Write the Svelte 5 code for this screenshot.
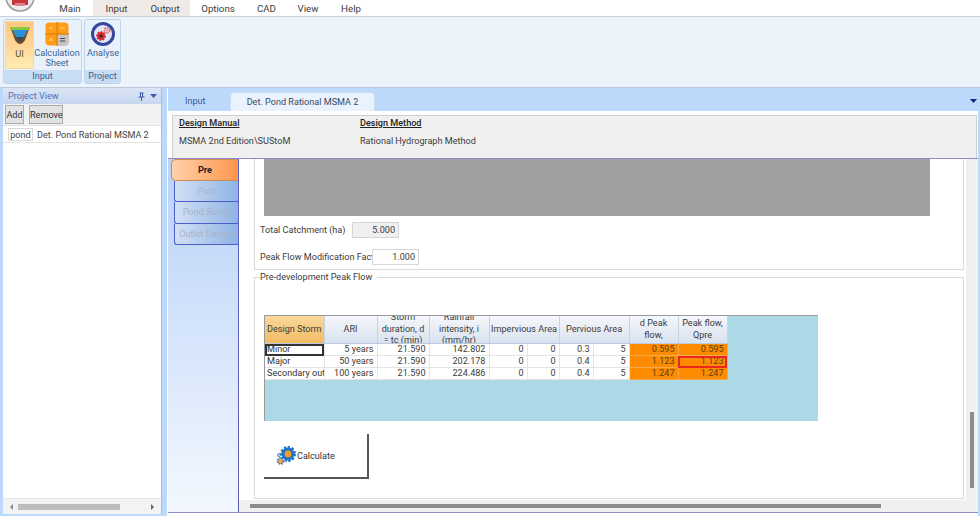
<script>
  const menus = [
    { label: 'Main', w: 46 },
    { label: 'Input', w: 47, on: true },
    { label: 'Output', w: 50, on: true },
    { label: 'Options', w: 56 },
    { label: 'CAD', w: 41 },
    { label: 'View', w: 42 },
    { label: 'Help', w: 44 }
  ];
  const cols = [59, 53, 52, 60, 38, 32, 34, 36, 49, 49];
  const rows = [
    ['Minor', '5 years', '21.590', '142.802', '0', '0', '0.3', '5', '0.595', '0.595'],
    ['Major', '50 years', '21.590', '202.178', '0', '0', '0.4', '5', '1.123', '1.123'],
    ['Secondary out', '100 years', '21.590', '224.486', '0', '0', '0.4', '5', '1.247', '1.247']
  ];
  const heads = [
    { t: ['Design Storm'], cls: 'first' },
    { t: ['ARI'] },
    { t: ['Storm', 'duration, d', '= tc (min)'] },
    { t: ['Rainfall', 'intensity, i', '(mm/hr)'] },
    { t: ['Impervious Area'], span: 2 },
    { t: ['Pervious Area'], span: 2 },
    { t: ['d Peak', 'flow,'] },
    { t: ['Peak flow,', 'Qpre'] }
  ];
</script>

<div class="page">
  <svg class="logo" width="30" height="12" viewBox="0 0 30 12" aria-hidden="true">
    <circle cx="15" cy="-3" r="14" fill="#eee" stroke="#9a9a9a" stroke-width="1.5" />
    <rect x="7" y="0" width="16" height="5" fill="#c8373c" />
    <rect x="10" y="3" width="10" height="3" fill="#e0808a" />
  </svg>

  <nav class="menu">
    {#each menus as m}
      <span class="menu-item" class:on={m.on} style="width:{m.w}px">{m.label}</span>
    {/each}
  </nav>

  <section class="ribbon">
    <div class="group g-input">
      <div class="tools">
        <div class="tool active">
          <svg width="24" height="24" viewBox="0 0 24 24" aria-hidden="true">
            <path d="M3 6 H21 L17 17 Q12 25 7 17 Z" fill="#6e4a2c" />
            <path d="M4 6 H20 L16 14 H8 Z" fill="#2b8fd8" />
            <path d="M2 4 H22 V7 H2 Z" fill="#8cc63f" />
            <path d="M8 14 H16 L13 19 H11 Z" fill="#3f4a55" />
          </svg>
          <span class="tool-label">UI</span>
        </div>
        <div class="tool calc">
          <svg width="24" height="24" viewBox="0 0 24 24" aria-hidden="true">
            <rect x="0.5" y="0.5" width="23" height="23" rx="4" fill="#ff9b14" />
            <path d="M12.5 12.5 H23.5 V20 Q23.5 23.5 20 23.5 H12.5 Z" fill="#c4c4c4" />
            <path d="M12 0 V24 M0 12 H24" stroke="#d97a00" stroke-width="1" />
            <path d="M4 6 H8 M15 6 H20 M4.500 16 L7.500 19 M7.500 16 L4.500 19" stroke="#ffd9a0" stroke-width="1" />
            <path d="M15 16.500 H20 M15 19 H20" stroke="#444" stroke-width="1" />
          </svg>
          <span class="tool-label">Calculation<br />Sheet</span>
        </div>
      </div>
      <div class="group-label">Input</div>
    </div>
    <div class="group g-project">
      <div class="tools">
        <div class="tool analyse">
          <svg width="24" height="24" viewBox="0 0 24 24" aria-hidden="true">
            <circle cx="12" cy="12" r="10.500" fill="#dfe6f5" stroke="#34489c" stroke-width="3" />
            <circle cx="10" cy="14" r="4" fill="#d92a35" stroke="#d92a35" stroke-width="2" stroke-dasharray="1.500 1.500" />
            <circle cx="10" cy="14" r="1.500" fill="#222" />
            <circle cx="16" cy="8.500" r="2.800" fill="#eeb3b8" stroke="#d9737c" stroke-width="1.500" stroke-dasharray="1.500 1" />
          </svg>
          <span class="tool-label">Analyse</span>
        </div>
      </div>
      <div class="group-label">Project</div>
    </div>
  </section>

  <div class="body">
    <aside class="side">
      <header class="side-head">
        <span>Project View</span>
        <span class="side-icons">
          <svg width="9" height="9" viewBox="0 0 9 9" aria-hidden="true"><path d="M2.500 1 H6.500 M3.500 1 V5 M5.500 1 V5 M1.500 5 H7.500 M4.500 5 V9" stroke="#3b5ba8" fill="none" /></svg>
          <svg width="7" height="4" viewBox="0 0 7 4" aria-hidden="true"><path d="M0 0 H7 L3.500 4 Z" fill="#3b5ba8" /></svg>
        </span>
      </header>
      <div class="side-btns">
        <button class="btn add">Add</button>
        <button class="btn remove">Remove</button>
      </div>
      <div class="list">
        <div class="list-row">
          <span class="cell">pond</span>
          <span>Det. Pond Rational MSMA 2</span>
        </div>
      </div>
      <div class="side-scroll">
        <span class="arrow-l"></span>
        <span class="side-thumb"></span>
        <span class="arrow-r"></span>
      </div>
    </aside>

    <main class="work">
      <div class="tabs">
        <span class="tab">Input</span>
        <span class="tab current">Det. Pond Rational MSMA 2</span>
        <svg class="tabs-menu" width="7" height="4" viewBox="0 0 7 4" aria-hidden="true"><path d="M0 0 H7 L3.500 4 Z" fill="#1a237e" /></svg>
      </div>

      <div class="doc">
        <div class="design">
          <div class="d-col">
            <strong>Design Manual</strong>
            <span>MSMA 2nd Edition\SUStoM</span>
          </div>
          <div class="d-col">
            <strong>Design Method</strong>
            <span>Rational Hydrograph Method</span>
          </div>
        </div>

        <div class="split">
          <div class="vtabs">
            <div class="vtab pre">Pre</div>
            <div class="vtab">Post</div>
            <div class="vtab">Pond Sizing</div>
            <div class="vtab">Outlet Design</div>
          </div>

          <div class="pane">
            <div class="pane-top">
              <div class="viewport">
                <div class="box one">
                  <div class="grey"></div>
                  <div class="field f1">
                    <span class="f-label">Total Catchment (ha)</span>
                    <span class="input ro">5.000</span>
                  </div>
                  <div class="field f2">
                    <span class="f-label clip">Peak Flow Modification Factor</span>
                    <span class="input">1.000</span>
                  </div>
                </div>

                <fieldset class="box two">
                  <legend>Pre-development Peak Flow</legend>
                  <div class="grid-wrap">
                    <table>
                      <colgroup>
                        {#each cols as c}<col style="width:{c}px" />{/each}
                      </colgroup>
                      <thead>
                        <tr>
                          {#each heads as h}
                            <th colspan={h.span || 1} class={h.cls || ''}>
                              <div class="th-in">
                                {#each h.t as line}<span>{line}</span>{/each}
                              </div>
                            </th>
                          {/each}
                        </tr>
                      </thead>
                      <tbody>
                        {#each rows as r, ri}
                          <tr>
                            {#each r as v, i}
                              <td
                                class:txt={i === 0}
                                class:peak={i >= 8}
                                class:sel={ri === 0 && i === 0}
                                class:hit={ri === 1 && i === 9}
                              >{v}</td>
                            {/each}
                          </tr>
                        {/each}
                      </tbody>
                    </table>
                  </div>
                  <button class="calc-btn">
                    <svg width="21" height="21" viewBox="0 0 21 21" aria-hidden="true">
                      <circle cx="12" cy="9" r="6.500" fill="#1f74c9" stroke="#1f74c9" stroke-width="3" stroke-dasharray="2.200 1.500" />
                      <circle cx="12" cy="9" r="5" fill="#1f74c9" />
                      <circle cx="12" cy="9" r="3.400" fill="#f59a2c" />
                      <circle cx="4.500" cy="16" r="3" fill="#f2a64a" stroke="#2f7fce" stroke-width="1.800" stroke-dasharray="1.500 1" />
                      <circle cx="3" cy="10" r="1.500" fill="#cfe0f2" stroke="#4a86c5" />
                    </svg>
                    <span>Calculate</span>
                  </button>
                </fieldset>
              </div>
              <div class="vscroll"><span class="vthumb"></span></div>
            </div>
            <div class="hscroll"><span class="hthumb"></span></div>
          </div>
        </div>
      </div>
    </main>
  </div>
</div>

<style>
  :global(body) {
    margin: 0;
    background: #fff;
  }
  .page {
    position: relative;
    width: 980px;
    height: 516px;
    overflow: hidden;
    display: flex;
    flex-direction: column;
    font-family: Roboto, "Noto Sans", sans-serif;
    font-size: 9.100px;
    color: #3c3c3c;
    background: #bcd8fb;
  }
  .logo {
    position: absolute;
    left: 5px;
    top: 0;
  }

  /* menu */
  .menu {
    height: 17px;
    flex: none;
    display: flex;
    padding-left: 47px;
    background: #fff;
    border-bottom: 1px solid #c9d3de;
    box-sizing: border-box;
  }
  .menu-item {
    flex: none;
    text-align: center;
    font-size: 9.700px;
    line-height: 17px;
    color: #3c3c3c;
  }
  .menu-item.on {
    background: #efeae6;
  }

  /* ribbon */
  .ribbon {
    height: 71px;
    flex: none;
    display: flex;
    gap: 2px;
    padding: 2px 0 3px 3px;
    box-sizing: border-box;
    background: #ecf3fb;
    border-bottom: 1px solid #b9c9dc;
  }
  .group {
    display: flex;
    flex-direction: column;
    border: 1px solid #bcd4ee;
    border-radius: 3px;
    background: #e9f1fb;
    box-sizing: border-box;
  }
  .g-input {
    width: 79px;
  }
  .g-project {
    width: 37px;
  }
  .tools {
    flex: 1;
    display: flex;
    padding: 1px 0 0 1px;
  }
  .tool {
    display: flex;
    flex-direction: column;
    align-items: center;
    box-sizing: border-box;
    padding-top: 1px;
    color: #42628f;
  }
  .tool-label {
    text-align: center;
    line-height: 10px;
    margin-top: 2px;
    white-space: nowrap;
  }
  .tool.active {
    width: 29px;
    height: 48px;
    background: linear-gradient(#fcc77f, #ffd79a 55%, #ffedb2);
    border: 1px solid #f3d9a8;
    color: #5b5230;
  }
  .tool.calc {
    width: 46px;
  }
  .tool.analyse {
    width: 35px;
  }
  .group-label {
    height: 13px;
    flex: none;
    background: #c6ddf4;
    text-align: center;
    line-height: 13px;
    color: #3e5f90;
  }

  /* body */
  .body {
    flex: 1;
    min-height: 0;
    display: flex;
  }
  .side {
    width: 159px;
    flex: none;
    margin: 0 0 2px 3px;
    display: flex;
    flex-direction: column;
    background: #fff;
    border-right: 1px solid #9fc0e8;
    box-sizing: border-box;
  }
  .side-head {
    height: 16px;
    flex: none;
    display: flex;
    justify-content: space-between;
    align-items: center;
    padding: 0 4px 0 5px;
    background: linear-gradient(#dbe5f6, #c7d6f0);
    color: #4d72b8;
  }
  .side-icons {
    display: flex;
    align-items: center;
    gap: 4px;
  }
  .side-btns {
    height: 21px;
    flex: none;
    display: flex;
    gap: 5px;
    padding: 1px 0 0 2px;
    box-sizing: border-box;
    background: #f1f2f4;
  }
  .btn {
    height: 19px;
    padding: 0;
    font: inherit;
    color: #333;
    background: #e2e2e2;
    border: 1px solid #ababab;
  }
  .btn.add {
    width: 19px;
  }
  .btn.remove {
    width: 34px;
  }
  .list {
    flex: 1;
    border-top: 1px solid #e3e3e3;
    background: #fff;
    padding-top: 1px;
  }
  .list-row {
    display: flex;
    align-items: center;
    gap: 4px;
    height: 16px;
    box-sizing: border-box;
    padding-left: 5px;
    border-bottom: 1px solid #e3e3e3;
    color: #444;
  }
  .cell {
    width: 25px;
    height: 13px;
    line-height: 12px;
    box-sizing: border-box;
    text-align: center;
    border: 1px solid #d9d9d9;
  }
  .side-scroll {
    height: 16px;
    flex: none;
    display: flex;
    align-items: center;
    padding: 0 7px;
    border-top: 1px solid #e6e6e6;
    background: #f3f3f3;
    box-sizing: border-box;
  }
  .arrow-l,
  .arrow-r {
    width: 0;
    height: 0;
    border-top: 3px solid transparent;
    border-bottom: 3px solid transparent;
  }
  .arrow-l {
    border-right: 3px solid #888;
  }
  .arrow-r {
    border-left: 3px solid #666;
    margin-left: auto;
  }
  .side-thumb {
    width: 102px;
    height: 6px;
    margin-left: 5px;
    background: #bdbdbd;
  }

  .work {
    flex: 1;
    min-width: 0;
    display: flex;
    flex-direction: column;
    margin-left: 5px;
    border-left: 1px solid #fff;
    box-sizing: border-box;
  }
  .tabs {
    height: 23px;
    flex: none;
    display: flex;
    align-items: flex-end;
    position: relative;
  }
  .tab {
    height: 19px;
    line-height: 18px;
    width: 62px;
    box-sizing: border-box;
    padding-left: 17px;
    color: #3b5d90;
  }
  .tab.current {
    width: 145px;
    background: #eaf2fd;
    border: 1px solid #c8dcf5;
    border-bottom: 0;
    border-radius: 4px 4px 0 0;
    color: #3b4a60;
    padding: 0;
    text-align: center;
  }
  .tabs-menu {
    position: absolute;
    right: 3px;
    top: 11px;
  }
  .doc {
    flex: 1;
    min-height: 0;
    margin-right: 2px;
    display: flex;
    flex-direction: column;
    background: #fff;
    padding: 4px 0 3px 4px;
    box-sizing: border-box;
  }
  .design {
    height: 43px;
    flex: none;
    display: flex;
    background: #f0f0f0;
    border: 1px solid #cfcfcf;
    border-bottom: 0;
    margin-right: 1px;
    box-sizing: border-box;
    padding-left: 6px;
  }
  .d-col {
    width: 181px;
    display: flex;
    flex-direction: column;
    padding-top: 2px;
    gap: 7px;
    line-height: 11px;
  }
  .d-col strong {
    text-decoration: underline;
    color: #222;
    font-weight: 500;
  }
  .split {
    flex: 1;
    min-height: 0;
    display: flex;
    border-top: 1px solid #8d8dc4;
    border-bottom: 1px solid #8d8dc4;
    background: linear-gradient(#b7d1f8, #f3f8fe);
    margin-left: -4px;
  }
  .vtabs {
    width: 71px;
    flex: none;
    padding-left: 3px;
    box-sizing: border-box;
    display: flex;
    flex-direction: column;
    align-items: flex-end;
    border-right: 1px solid #5a5fc0;
  }
  .vtab {
    width: 64px;
    height: 21.500px;
    line-height: 20px;
    box-sizing: border-box;
    text-align: center;
    white-space: nowrap;
    color: #a9b4c6;
    background: linear-gradient(90deg, #d2dff5, #8fb4e5);
    border: 1px solid #4d5fc6;
    border-right: 0;
    border-top: 0;
    border-radius: 0 0 0 3px;
  }
  .vtab.pre {
    width: 67px;
    border: 1px solid #d08a55;
    border-right: 0;
    border-radius: 5px 0 0 5px;
    background: linear-gradient(90deg, #ffd0ab, #ff974c);
    color: #222;
    font-weight: 700;
  }
  .pane {
    flex: 1;
    min-width: 0;
    display: flex;
    flex-direction: column;
    background: #f0f0f0;
  }
  .pane-top {
    flex: 1;
    min-height: 0;
    display: flex;
  }
  .viewport {
    flex: 1;
    min-width: 0;
    background: #fff;
    padding-left: 15px;
    overflow: hidden;
  }
  .box {
    margin: 0;
    width: 710px;
    box-sizing: border-box;
    border: 1px solid #d9d9d9;
    background: #fff;
  }
  .box.one {
    height: 111px;
    border-top: 0;
    padding-left: 5px;
  }
  .grey {
    width: 666px;
    height: 57px;
    margin-left: 4px;
    background: #a0a0a0;
  }
  .field {
    display: flex;
    align-items: center;
  }
  .f1 {
    margin-top: 5px;
    height: 17px;
  }
  .f2 {
    margin-top: 11px;
    height: 16px;
  }
  .f-label {
    white-space: nowrap;
  }
  .f1 .f-label {
    width: 92px;
  }
  .f2 .f-label {
    width: 112px;
    overflow: hidden;
  }
  .input {
    width: 47px;
    height: 16px;
    line-height: 14px;
    box-sizing: border-box;
    text-align: right;
    padding-right: 3px;
    border: 1px solid #d5d5d5;
    background: #fff;
  }
  .input.ro {
    background: #f0f0f0;
  }
  .box.two {
    margin-top: 1px;
    height: 228px;
    padding: 0 0 0 9px;
    min-width: 0;
  }
  legend {
    padding: 0 5px 0 0;
    margin-left: -4px;
    line-height: 12px;
    white-space: nowrap;
  }
  .grid-wrap {
    width: 554px;
    height: 106px;
    margin-top: 32px;
    box-sizing: border-box;
    background: #add8e6;
    border-top: 1px solid #9a9a9a;
    border-left: 1px solid #9a9a9a;
  }
  table {
    table-layout: fixed;
    width: 462px;
    border-collapse: collapse;
    font-size: 9.100px;
  }
  th {
    padding: 0;
    font-weight: 400;
    background: linear-gradient(#f4f7fb, #d9e2ef);
    border-right: 1px solid #c5d2e2;
    border-bottom: 1px solid #bccbe0;
  }
  th.first {
    background: linear-gradient(#f9d79b, #f2bb62);
  }
  .th-in {
    height: 27px;
    overflow: hidden;
    display: flex;
    flex-direction: column;
    align-items: center;
    justify-content: center;
    line-height: 11.500px;
    white-space: nowrap;
  }
  .th-in span {
    flex: none;
  }
  td {
    height: 11.600px;
    padding: 0 3px 0 0;
    line-height: 11px;
    box-sizing: border-box;
    text-align: right;
    background: #fff;
    border-right: 1px solid #e4e4e4;
    border-bottom: 1px solid #e4e4e4;
    white-space: nowrap;
    overflow: hidden;
  }
  td.txt {
    text-align: left;
    padding: 0 0 0 2px;
    color: #333;
  }
  td.peak {
    background: #ff8c00;
    border-color: #f5a94d;
    color: #57400f;
  }
  td.sel {
    outline: 2px solid #333;
    outline-offset: -2px;
  }
  td.hit {
    outline: 2px solid #e8281e;
    outline-offset: -2px;
  }
  .calc-btn {
    display: flex;
    align-items: center;
    width: 105px;
    height: 45px;
    margin-top: 13px;
    padding: 0 0 0 12px;
    box-sizing: border-box;
    font: inherit;
    color: #333;
    background: #fff;
    border: 0;
    border-right: 2px solid #555;
    border-bottom: 2px solid #555;
  }
  .vscroll {
    width: 12px;
    flex: none;
    display: flex;
    justify-content: center;
    box-sizing: border-box;
    padding-top: 253px;
  }
  .vthumb {
    width: 4px;
    height: 76px;
    background: #8c8c8c;
  }
  .hscroll {
    height: 12px;
    flex: none;
    box-sizing: border-box;
    padding: 4px 0 0 11px;
  }
  .hthumb {
    display: block;
    width: 631px;
    height: 4px;
    background: #8c8c8c;
  }
</style>
